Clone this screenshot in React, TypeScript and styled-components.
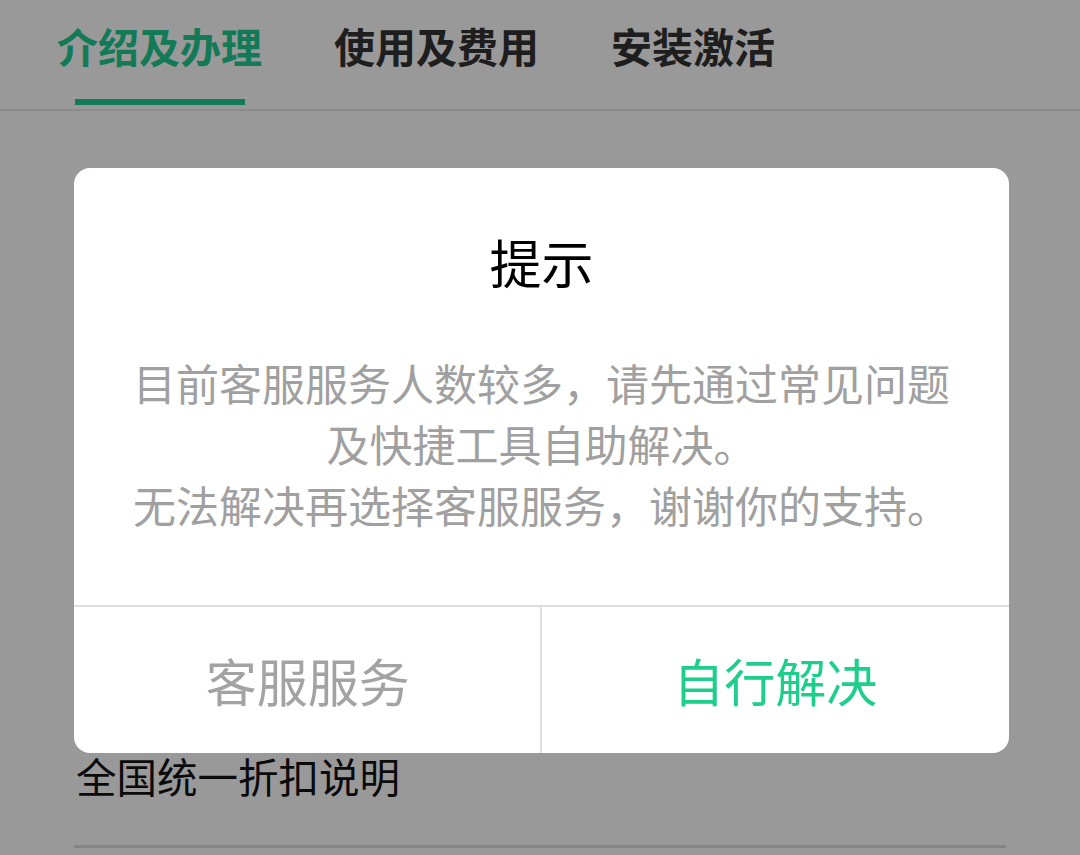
import React from "react";
import styled, { createGlobalStyle } from "styled-components";

const Global = createGlobalStyle`
  html, body { margin: 0; padding: 0; background: #ffffff; }
  body { font-family: "Noto Sans CJK SC", "Noto Sans", sans-serif; }
  * { box-sizing: border-box; }
`;

const Page = styled.div`
  width: 1080px;
  height: 855px;
  overflow: hidden;
  position: relative;
  background: #ffffff;
`;

const TabBar = styled.div`
  display: flex;
  gap: 72px;
  height: 111px;
  padding-left: 57px;
  border-bottom: 2px solid #e6e6e6;
`;

const Tab = styled.div<{ $active?: boolean }>`
  position: relative;
  font-size: 41px;
  font-weight: 700;
  line-height: 1;
  padding-top: 25px;
  color: ${(p) => (p.$active ? "#20cb91" : "#333333")};
  white-space: nowrap;
`;

const Indicator = styled.span`
  position: absolute;
  left: 50%;
  transform: translateX(-50%);
  top: 99px;
  width: 170px;
  height: 6px;
  background: #20cb91;
`;

const Content = styled.div`
  padding: 0 74px;
  display: flex;
  flex-direction: column;
  padding-top: 645px;
`;

const Item = styled.div`
  font-size: 40.5px;
  line-height: 1;
  color: #111111;
  padding-left: 2px;
  padding-bottom: 48px;
  border-bottom: 3px solid #dedede;
`;

const Overlay = styled.div`
  position: absolute;
  inset: 0;
  background: rgba(0, 0, 0, 0.4);
  display: flex;
  justify-content: center;
  align-items: flex-start;
  padding-top: 168px;
  padding-left: 3px;
`;

const Dialog = styled.div`
  width: 935px;
  background: #ffffff;
  border-radius: 16px;
  overflow: hidden;
  display: flex;
  flex-direction: column;
`;

const Body = styled.div`
  padding: 58px 20px 70px;
  display: flex;
  flex-direction: column;
  align-items: center;
`;

const Title = styled.div`
  font-size: 52px;
  line-height: 72px;
  color: #000000;
`;

const Message = styled.div`
  margin-top: 54px;
  font-size: 43px;
  line-height: 61px;
  color: #a0a0a0;
  text-align: center;
  white-space: nowrap;
`;

const Footer = styled.div`
  display: grid;
  grid-template-columns: 1fr 1fr;
  height: 148px;
  border-top: 2px solid #dddddd;
`;

const Button = styled.div<{ $primary?: boolean }>`
  display: flex;
  align-items: center;
  justify-content: center;
  font-size: 51px;
  color: ${(p) => (p.$primary ? "#1ecf8b" : "#a3a3a3")};
  & + & {
    border-left: 2px solid #dddddd;
    margin-left: -2px;
  }
`;

export default function App() {
  return (
    <>
      <Global />
      <Page>
        <TabBar>
          <Tab $active>
            介绍及办理
            <Indicator />
          </Tab>
          <Tab>使用及费用</Tab>
          <Tab>安装激活</Tab>
        </TabBar>
        <Content>
          <Item>全国统一折扣说明</Item>
        </Content>
        <Overlay>
          <Dialog>
            <Body>
              <Title>提示</Title>
              <Message>
                目前客服服务人数较多，请先通过常见问题
                <br />
                及快捷工具自助解决。
                <br />
                无法解决再选择客服服务，谢谢你的支持。
              </Message>
            </Body>
            <Footer>
              <Button>客服服务</Button>
              <Button $primary>自行解决</Button>
            </Footer>
          </Dialog>
        </Overlay>
      </Page>
    </>
  );
}
